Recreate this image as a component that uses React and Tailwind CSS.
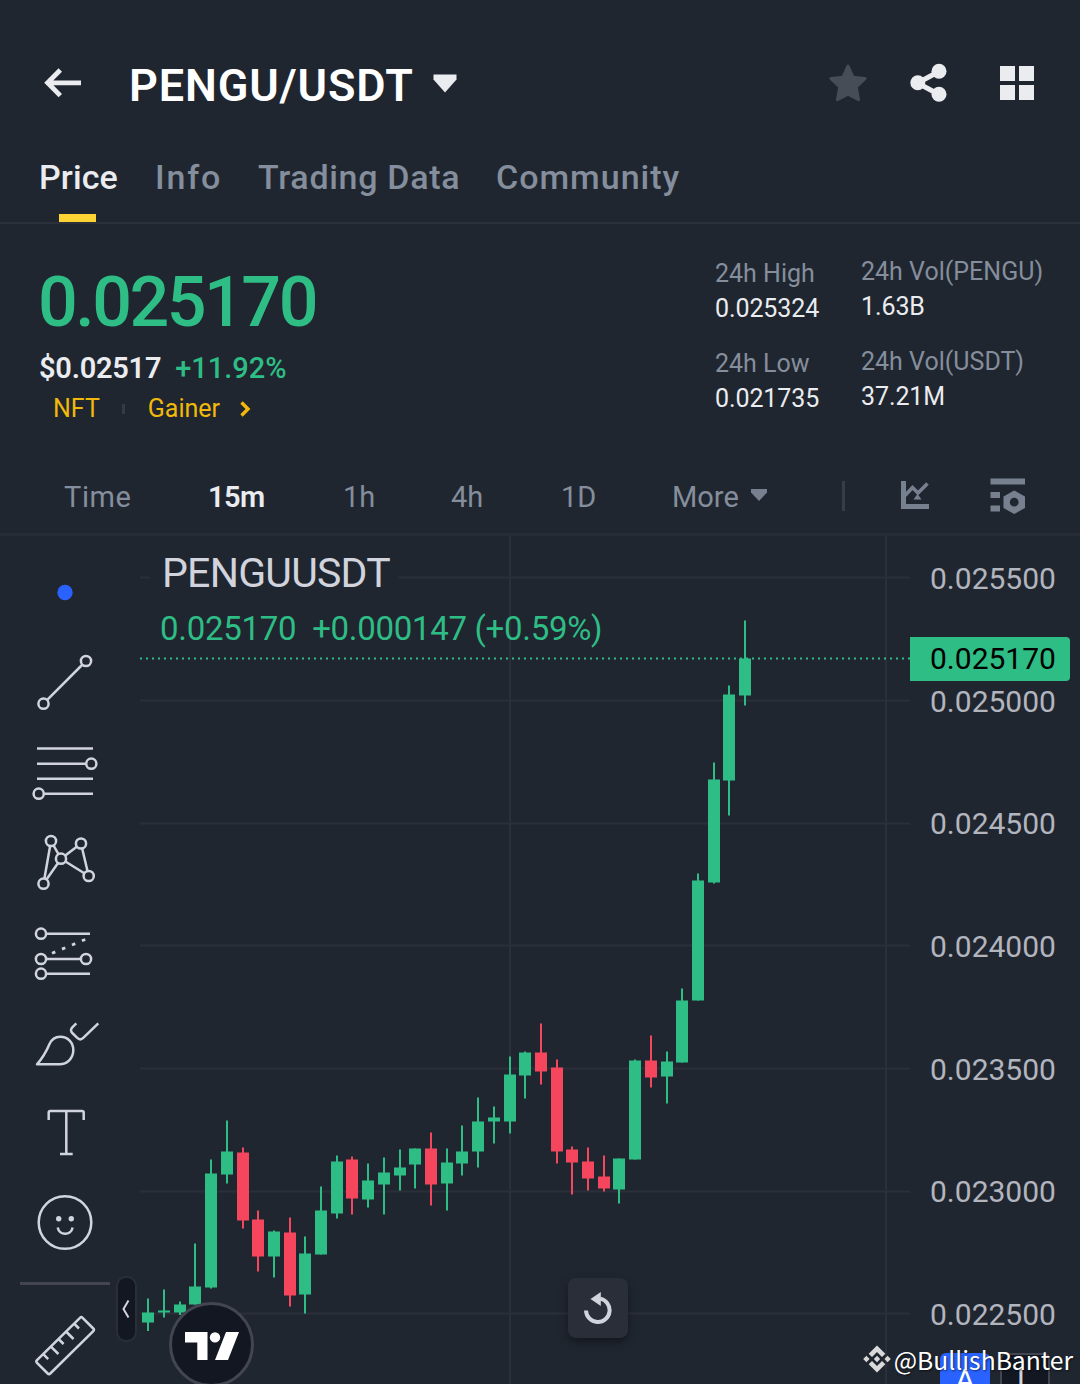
import React, { useState } from "react";

const UP = "#2ebd85";
const DOWN = "#f6465d";

const tabs = [
  { label: "Price", className: "w-[116px] tracking-[0.1px]" },
  { label: "Info", className: "w-[103px] tracking-[1.8px]" },
  { label: "Trading Data", className: "w-[238px] tracking-[0.7px]" },
  { label: "Community", className: "tracking-[1px]" },
];

const stats = [
  [
    { label: "24h High", value: "0.025324" },
    { label: "24h Low", value: "0.021735" },
  ],
  [
    { label: "24h Vol(PENGU)", value: "1.63B" },
    { label: "24h Vol(USDT)", value: "37.21M" },
  ],
];

const intervals = [
  { label: "Time", className: "w-[144px] tracking-[0.6px]" },
  { label: "15m", className: "w-[135px] tracking-[-0.6px]" },
  { label: "1h", className: "w-[108px]" },
  { label: "4h", className: "w-[110px]" },
  { label: "1D", className: "w-[111px]" },
];

const axisLabels = ["0.025500", "0.025000", "0.024500", "0.024000", "0.023500", "0.023000", "0.022500"];
const gridLines = [577.5, 700.5, 823.5, 945.5, 1068.5, 1191.5, 1313.5];

// [x, high, bodyTop, bodyBottom, low, down]
const candles = [
  [142, 1298.5, 1312.5, 1322.5, 1331],
  [158, 1289.5, 1310.5, 1312.5, 1317.5],
  [174, 1301.5, 1304.5, 1312.5, 1315],
  [189, 1243.5, 1286.5, 1304.5, 1304.5],
  [205, 1159.5, 1173.5, 1287.5, 1288.5],
  [221, 1120.5, 1151.5, 1174.5, 1183.5],
  [237, 1147.5, 1152.5, 1220.5, 1228.5, true],
  [252, 1210.5, 1219.5, 1256.5, 1271.5, true],
  [268, 1230.5, 1231.5, 1256.5, 1277.5],
  [284, 1217.5, 1232.5, 1295.5, 1306.5, true],
  [299, 1236.5, 1253.5, 1294.5, 1313.5],
  [315, 1186.5, 1210.5, 1254.5, 1254.5],
  [331, 1155.5, 1161.5, 1213.5, 1218.5],
  [346, 1156.5, 1159.5, 1198.5, 1214.5, true],
  [362, 1163.5, 1180.5, 1199.5, 1207.5],
  [378, 1157.5, 1172.5, 1184.5, 1214.5],
  [394, 1149.5, 1167.5, 1175.5, 1190.5],
  [409, 1148.5, 1148.5, 1164.5, 1188.5],
  [425, 1132.5, 1148.5, 1184.5, 1205.5, true],
  [441, 1148.5, 1162.5, 1183.5, 1210.5],
  [456, 1125.5, 1151.5, 1163.5, 1175.5],
  [472, 1097.5, 1121.5, 1151.5, 1167.5],
  [488, 1106.5, 1117.5, 1121.5, 1143.5],
  [504, 1056.5, 1074.5, 1121.5, 1133.5],
  [519, 1051.5, 1052.5, 1075.5, 1098.5],
  [535, 1023.5, 1052.5, 1071.5, 1084.5, true],
  [551, 1059.5, 1067.5, 1151.5, 1163.5, true],
  [566, 1146.5, 1149.5, 1162.5, 1194.5, true],
  [582, 1147.5, 1161.5, 1178.5, 1190.5, true],
  [598, 1155.5, 1176.5, 1188.5, 1191.5, true],
  [613, 1158.5, 1158.5, 1189.5, 1203.5],
  [629, 1059.5, 1060.5, 1159.5, 1159.5],
  [645, 1035.5, 1060.5, 1077.5, 1087.5, true],
  [661, 1051.5, 1061.5, 1076.5, 1103.5],
  [676, 988.5, 1000.5, 1062.5, 1062.5],
  [692, 873.5, 880.5, 1000.5, 1000.5],
  [708, 762.5, 779.5, 882.5, 883.5],
  [723, 685.5, 694.5, 780.5, 815.5],
  [739, 620.5, 658.5, 695.5, 705.5],
];

const Header = () => (
  <header className="flex h-[132px] items-center pt-[34px]">
    <svg className="ml-11 h-[30px] w-[38px]" viewBox="0 0 38 30" fill="none" stroke="#eaecef" strokeWidth="4.8">
      <path d="M16.3 2L3.6 14.8L16.3 27.6M3.6 14.8H37" />
    </svg>
    <h1 className="mt-[5px] ml-[47px] w-[304px] text-[45px] font-semibold tracking-[0.85px] whitespace-nowrap text-white">
      PENGU/USDT
    </h1>
    <svg className="h-[19px] w-6" viewBox="0 0 24 19" fill="#eaecef">
      <path d="M0.5 0.5H23.5V5.5L12 18.5L0.5 5.5Z" />
    </svg>
    <svg
      className="ml-[372px] h-[38px] w-[38px]"
      viewBox="0 0 38 38"
      fill="#474d57"
      stroke="#474d57"
      strokeWidth="3"
      strokeLinejoin="round"
    >
      <path d="M19 2L24 13.2L36 14.6L27.2 22.8L29.6 35.6L19 30.2L8.4 35.6L10.8 22.8L2 14.6L14 13.2Z" />
    </svg>
    <svg className="ml-[43px] h-10 w-[38px]" viewBox="0 0 38 40" fill="#eaecef">
      <path d="M29 8.5L7.5 20L29 31.5" fill="none" stroke="#eaecef" strokeWidth="5" />
      <circle cx="29" cy="8.3" r="7.5" />
      <circle cx="7.8" cy="19.8" r="7.5" />
      <circle cx="29" cy="31.3" r="7.5" />
    </svg>
    <div className="ml-[52px] grid grid-cols-2 gap-1">
      {[0, 1, 2, 3].map((i) => (
        <span key={i} className="h-[15px] w-[15px] bg-[#eaecef]" />
      ))}
    </div>
  </header>
);

const Tabs = ({ active, onSelect }) => (
  <nav className="flex h-[92px] items-center border-b-2 border-[#2b303a] pl-[39px] text-[34px] font-medium">
    {tabs.map((tab) => (
      <button
        key={tab.label}
        type="button"
        onClick={() => onSelect(tab.label)}
        className={`relative flex h-full items-center whitespace-nowrap ${tab.className} ${
          active === tab.label ? "text-[#eaecef]" : "text-[#848e9c]"
        }`}
      >
        {tab.label}
        {active === tab.label && <span className="absolute bottom-0 left-5 h-2 w-[37px] bg-[#fcd535]" />}
      </button>
    ))}
  </nav>
);

const Summary = () => (
  <section className="flex h-[237px]">
    <div className="w-[715px] shrink-0 pt-[43px] pl-[38px]">
      <div className="h-[70px] text-[70px] leading-[70px] font-medium tracking-[-2.5px] text-[#2ebd85]">
        0.025170
      </div>
      <div className="mt-4 flex h-8 items-center gap-3.5 pl-px text-[29px]">
        <span className="font-semibold tracking-[-0.25px] text-[#eaecef]">$0.02517</span>
        <span className="font-medium text-[#2ebd85]">+11.92%</span>
      </div>
      <div className="mt-2 flex h-8 items-center pl-[15px] text-[25px] text-[#f0b90b]">
        <span>NFT</span>
        <span className="ml-[22px] h-2.5 w-[3px] bg-[#333b47]" />
        <span className="ml-[23px]">Gainer</span>
        <svg className="ml-5 h-4 w-[11px]" viewBox="0 0 11 16" fill="none" stroke="#f0b90b" strokeWidth="3.4">
          <path d="M1.5 1.5L8 8L1.5 14.5" />
        </svg>
      </div>
    </div>
    {stats.map((column, i) => (
      <div key={i} className={`flex flex-col gap-5 text-[25px] leading-[35px] ${i === 0 ? "w-[146px] pt-8" : "pt-[30px]"}`}>
        {column.map((item) => (
          <div key={item.label} className="whitespace-nowrap">
            <div className="text-[#848e9c]">{item.label}</div>
            <div className="tracking-[-0.1px] text-[#eaecef]">{item.value}</div>
          </div>
        ))}
      </div>
    ))}
  </section>
);

const IntervalBar = ({ active, onSelect }) => (
  <div className="flex h-[75px] items-center border-b-[3px] border-[#262b36] pl-16 text-[29px] text-[#848e9c]">
    {intervals.map((item) => (
      <button
        key={item.label}
        type="button"
        onClick={() => onSelect(item.label)}
        className={`mt-0.5 text-left ${item.className} ${active === item.label ? "font-semibold text-[#eaecef]" : ""}`}
      >
        {item.label}
      </button>
    ))}
    <span className="mt-0.5 w-[79px]">More</span>
    <svg className="-mt-1 h-3 w-4" viewBox="0 0 16 12" fill="#76808f">
      <path d="M0 0H16V3.5L8 12L0 3.5Z" />
    </svg>
    <span className="-mt-0.5 ml-[75px] h-[30px] w-[3px] bg-[#363c48]" />
    <svg className="-mt-1 ml-[56px] h-7 w-7" viewBox="0 0 28 28" fill="none" stroke="#76808f">
      <path d="M2.5 0V25.5H28" strokeWidth="5" />
      <path d="M4 14.5L11.5 6.5L17 12L26.5 2.5" strokeWidth="3.6" />
      <path d="M16.5 13L20.5 18.5H12.5Z" fill="#76808f" stroke="none" />
    </svg>
    <svg className="-mt-0.5 ml-[61px] h-9 w-9" viewBox="0 0 36 36" fill="#76808f">
      <path d="M0.5 0.5H35V6.5H0.5ZM0.5 14H10V20H0.5ZM0.5 27.5H10V33.5H0.5Z" />
      <path
        fillRule="evenodd"
        d="M24.2 12.5L35 18.5V30L24.2 36L13.5 30V18.5ZM24.2 19.8a4.4 4.4 0 1 0 0 8.8a4.4 4.4 0 1 0 0 -8.8Z"
      />
    </svg>
  </div>
);

const Tool = ({ children }) => (
  <svg
    className="h-[90px] w-full shrink-0"
    viewBox="0 0 140 90"
    fill="none"
    stroke="#d1d4dc"
    strokeWidth="2.5"
    strokeLinejoin="round"
  >
    {children}
  </svg>
);

const Node = ({ x, y }) => <circle cx={x} cy={y} r="5.1" fill="#202630" />;

const ToolPanel = () => (
  <aside className="relative flex w-[140px] shrink-0 flex-col pt-[11px]">
    <Tool>
      <circle cx="65" cy="45.5" r="7.7" fill="#2962ff" stroke="none" />
    </Tool>
    <Tool>
      <path d="M43.5 66.7L86 24" />
      <Node x={43.5} y={66.7} />
      <Node x={86} y={24} />
    </Tool>
    <Tool>
      <path d="M37 21.5H93M37 36.7H86M37 51.7H93M44 66.7H93" />
      <Node x={91.3} y={36.7} />
      <Node x={38.7} y={66.7} />
    </Tool>
    <Tool>
      <path d="M43.5 66.7L51 24L61 41.7L43.5 66.7M61 41.7L81 26.5L88.7 59L61 41.7" />
      <Node x={51} y={24} />
      <Node x={81} y={26.5} />
      <Node x={61} y={41.7} />
      <Node x={88.7} y={59} />
      <Node x={43.5} y={66.7} />
    </Tool>
    <Tool>
      <path d="M41 26.7H90M41 52H86M41 66.7H90" />
      <path d="M52 46.3L87.5 31.5" strokeWidth="2.8" strokeDasharray="3.6 7.2" />
      <Node x={41} y={26.7} />
      <Node x={41} y={52} />
      <Node x={41} y={66.7} />
      <Node x={86} y={52} />
    </Tool>
    <Tool>
      <path d="M37 67.3C43 60.5 47 53 49.5 47C52 41.5 56 39.7 60 39.7C68 39.7 73.3 45.5 73.3 53C73.3 61.5 67 67.3 59.5 67.3Z" />
      <path d="M76.3 26.3L72.3 30.3C70.6 32 70.6 34.3 72.3 36L77 40.7C79 42.7 81.5 42.7 83.5 40.7L98.3 26.3" />
    </Tool>
    <Tool>
      <path d="M48.7 33V25.5Q48.7 23.9 50.3 23.9H82Q83.7 23.9 83.7 25.5V33M66.3 24V67M60 67H72.7" />
    </Tool>
    <Tool>
      <circle cx="65" cy="45.5" r="26.3" />
      <circle cx="58.7" cy="41.7" r="2.7" fill="#d1d4dc" stroke="none" />
      <circle cx="71.3" cy="41.7" r="2.7" fill="#d1d4dc" stroke="none" />
      <path d="M57.7 50.5C59.3 58.8 71 58.8 72.6 50.5" />
    </Tool>
    <div className="mt-[15px] ml-5 h-[3px] w-[90px] shrink-0 bg-[#434651]" />
    <div className="mt-[15px]">
      <Tool>
        <path d="M80 17.8Q81.3 16.5 82.6 17.8L93.3 28.5Q94.6 29.8 93.3 31.1L50.3 73.5Q49 74.8 47.7 73.5L37 62.8Q35.7 61.5 37 60.2Z" />
        <path d="M43.3 54.2L48.2 59.2M50.9 46.6L58.4 54M58.5 39L63.6 44M66 31.5L73.5 39M74 23.5L79 28.5" />
      </Tool>
    </div>
    <button
      type="button"
      className="absolute top-[740px] left-[116px] flex h-[66px] w-[21px] items-center justify-center rounded-[10px] border-2 border-[#2a2e39] bg-[#131722]"
    >
      <svg className="mr-0.5 h-5 w-2" viewBox="0 0 8 20" fill="none" stroke="#d1d4dc" strokeWidth="2">
        <path d="M6.5 1.5L1.5 10L6.5 18.5" />
      </svg>
    </button>
  </aside>
);

const Chart = () => (
  <div className="relative w-[770px] shrink-0">
    <svg className="block h-[848px] w-[770px]" viewBox="140 536 770 848">
      {gridLines.map((y) => (
        <path key={y} d={`M140 ${y}H910`} stroke="#2a2f3a" strokeWidth="2" />
      ))}
      <path d="M510 536V1384M886 536V1384" stroke="#2a2f3a" strokeWidth="2" />
      {candles.map(([x, high, top, bottom, low, down]) => (
        <g key={x} fill={down ? DOWN : UP}>
          <rect x={x + 5} y={high} width="2" height={low - high} />
          <rect x={x} y={top} width="12" height={bottom - top} />
        </g>
      ))}
      <path d="M140 658.5H910" stroke={UP} strokeWidth="2" strokeDasharray="2 4" />
    </svg>
    <div className="absolute top-[13px] left-[10px] flex flex-col items-start whitespace-nowrap">
      <span className="h-[48px] bg-[#202630] pr-2 pl-3 text-[41px] leading-[48px] tracking-[-0.75px] text-[#d1d4dc]">
        PENGUUSDT
      </span>
      <span className="mt-2 h-[48px] pl-2.5 text-[33px] leading-[48px] tracking-[-0.3px] text-[#2ebd85]">
        0.025170<span className="ml-4">+0.000147 (+0.59%)</span>
      </span>
    </div>
    <div className="absolute top-[766px] left-[29px] flex h-[85px] w-[85px] items-center justify-center rounded-full border-[3px] border-[#434651] bg-[#131722]">
      <svg className="mt-0.5 h-7 w-[54px]" viewBox="0 0 54 28" fill="#fff">
        <path d="M0 0H22.5V28H12.3V10.5H0Z" />
        <circle cx="30" cy="5.4" r="5.2" />
        <path d="M41 0H54L43 28H30Z" />
      </svg>
    </div>
    <button
      type="button"
      className="absolute top-[742px] left-[428px] flex h-[60px] w-[60px] items-center justify-center rounded-lg bg-[#2a2e39] shadow-[0_4px_8px_rgba(0,0,0,0.4)]"
    >
      <svg className="h-8 w-7" viewBox="0 0 28 32" fill="none">
        <path d="M2 18.5A11.8 11.8 0 1 0 16.2 6.6" stroke="#d1d4dc" strokeWidth="4" />
        <path d="M6.5 7L16.8 0V14Z" fill="#d1d4dc" />
      </svg>
    </button>
  </div>
);

const PriceAxis = () => (
  <div className="relative w-[170px] shrink-0 pt-[27px] text-[30px] leading-8 text-[#b2b5be]">
    <div className="flex flex-col gap-[90.7px] pl-5">
      {axisLabels.map((label) => (
        <span key={label}>{label}</span>
      ))}
    </div>
    <div className="absolute top-[100.5px] left-0 flex h-11 w-40 items-center rounded-r bg-[#2ebd85] pl-5 text-black">
      0.025170
    </div>
    <div className="absolute top-[817px] left-[30px] flex gap-2.5">
      <span className="flex h-[50px] w-[50px] items-center justify-center rounded-t-md bg-[#2962ff] pt-1 text-[30px] text-white">
        A
      </span>
      <span className="flex h-[50px] w-[50px] items-center justify-center rounded-t-md border-2 border-[#434651] bg-[#131722] pt-1 text-[30px] text-[#d1d4dc]">
        L
      </span>
    </div>
  </div>
);

const Watermark = () => (
  <div className="absolute right-[7px] bottom-[7px] flex items-center gap-[3px]">
    <svg className="h-7 w-7" viewBox="0 0 28 28" fill="#d9d9d9">
      <path d="M14 0.5L22.3 8.8L19 12L14 7L9 12L5.7 8.8Z" />
      <path d="M14 27.5L22.3 19.2L19 16L14 21L9 16L5.7 19.2Z" />
      <path d="M14 10.8L17.2 14L14 17.2L10.8 14ZM3.4 10.8L6.6 14L3.4 17.2L0.2 14ZM24.6 10.8L27.8 14L24.6 17.2L21.4 14Z" />
    </svg>
    <span className="font-['Noto_Sans_CJK_SC',sans-serif] text-[24.7px] leading-9 text-white [text-shadow:1px_1px_2px_rgba(0,0,0,0.6)]">
      @BullishBanter
    </span>
  </div>
);

const App = () => {
  const [activeTab, setActiveTab] = useState("Price");
  const [activeInterval, setActiveInterval] = useState("15m");

  return (
    <div className="relative h-[1384px] w-[1080px] overflow-hidden bg-[#202630] font-[Roboto,sans-serif]">
      <Header />
      <Tabs active={activeTab} onSelect={setActiveTab} />
      <Summary />
      <IntervalBar active={activeInterval} onSelect={setActiveInterval} />
      <main className="flex h-[848px] overflow-hidden">
        <ToolPanel />
        <Chart />
        <PriceAxis />
      </main>
      <Watermark />
    </div>
  );
};

export default App;
